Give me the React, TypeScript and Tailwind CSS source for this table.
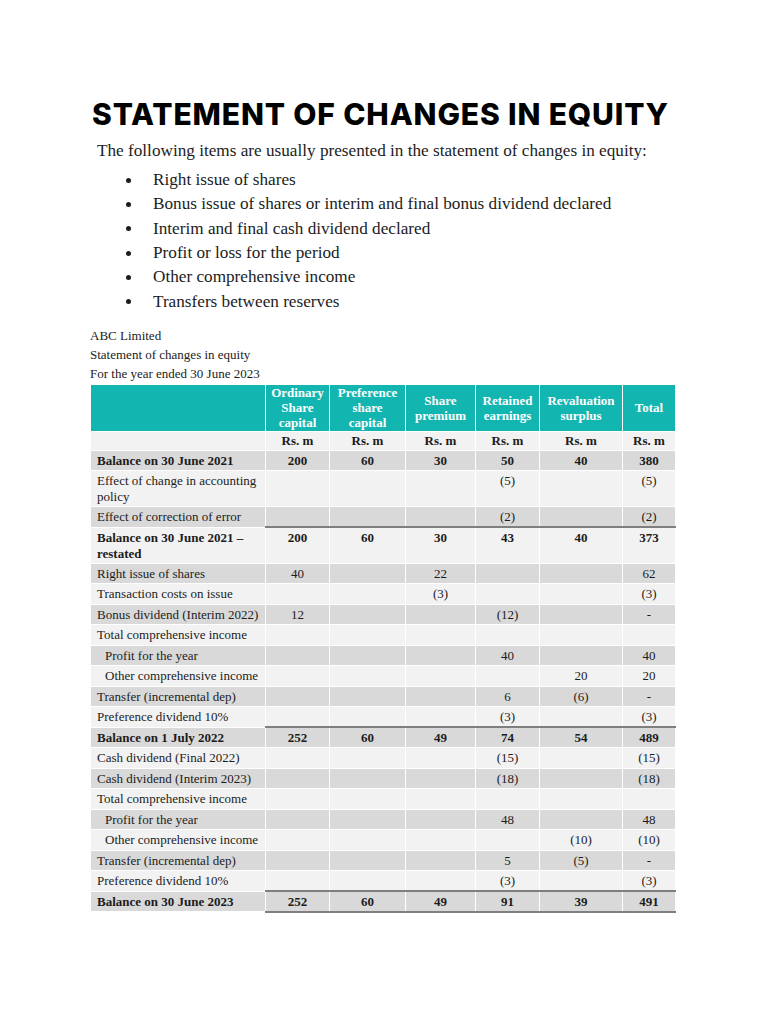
const items = [
  "Right issue of shares",
  "Bonus issue of shares or interim and final bonus dividend declared",
  "Interim and final cash dividend declared",
  "Profit or loss for the period",
  "Other comprehensive income",
  "Transfers between reserves",
];

type Row = {
  label: string;
  values: string[];
  bold?: boolean;
  indent?: boolean;
  dark?: boolean;
  topLine?: boolean;
  bottomLine?: boolean;
  tall?: boolean;
};

const rows: Row[] = [
  { label: "Balance on 30 June 2021", values: ["200", "60", "30", "50", "40", "380"], bold: true, dark: true },
  { label: "Effect of change in accounting policy", values: ["", "", "", "(5)", "", "(5)"], tall: true },
  { label: "Effect of correction of error", values: ["", "", "", "(2)", "", "(2)"], dark: true },
  { label: "Balance on 30 June 2021 – restated", values: ["200", "60", "30", "43", "40", "373"], bold: true, topLine: true, tall: true },
  { label: "Right issue of shares", values: ["40", "", "22", "", "", "62"], dark: true },
  { label: "Transaction costs on issue", values: ["", "", "(3)", "", "", "(3)"] },
  { label: "Bonus dividend (Interim 2022)", values: ["12", "", "", "(12)", "", "-"], dark: true },
  { label: "Total comprehensive income", values: ["", "", "", "", "", ""] },
  { label: "Profit for the year", values: ["", "", "", "40", "", "40"], indent: true, dark: true },
  { label: "Other comprehensive income", values: ["", "", "", "", "20", "20"], indent: true },
  { label: "Transfer (incremental dep)", values: ["", "", "", "6", "(6)", "-"], dark: true },
  { label: "Preference dividend 10%", values: ["", "", "", "(3)", "", "(3)"] },
  { label: "Balance on 1 July 2022", values: ["252", "60", "49", "74", "54", "489"], bold: true, dark: true, topLine: true },
  { label: "Cash dividend (Final 2022)", values: ["", "", "", "(15)", "", "(15)"] },
  { label: "Cash dividend (Interim 2023)", values: ["", "", "", "(18)", "", "(18)"], dark: true },
  { label: "Total comprehensive income", values: ["", "", "", "", "", ""] },
  { label: "Profit for the year", values: ["", "", "", "48", "", "48"], indent: true, dark: true },
  { label: "Other comprehensive income", values: ["", "", "", "", "(10)", "(10)"], indent: true },
  { label: "Transfer (incremental dep)", values: ["", "", "", "5", "(5)", "-"], dark: true },
  { label: "Preference dividend 10%", values: ["", "", "", "(3)", "", "(3)"] },
  { label: "Balance on 30 June 2023", values: ["252", "60", "49", "91", "39", "491"], bold: true, dark: true, topLine: true, bottomLine: true },
];

const headers = [
  ["Ordinary", "Share", "capital"],
  ["Preference", "share", "capital"],
  ["Share", "premium"],
  ["Retained", "earnings"],
  ["Revaluation", "surplus"],
  ["Total"],
];

const App = () => {
  return (
    <div className="min-h-[1024px] w-[768px] bg-white text-[#1c1c1c]">
      <div className="pl-[92px] pt-[96px]">
        <h1 className="font-['Inter',sans-serif] text-[30px] font-extrabold leading-[36px] tracking-[0.85px] text-black">
          STATEMENT OF CHANGES IN EQUITY
        </h1>
      </div>

      <div className="pl-[97px] pt-[7px] font-['Liberation_Serif',serif] text-[17.2px] leading-[24px]">
        <p>The following items are usually presented in the statement of changes in equity:</p>
        <ul className="mt-[5px]">
          {items.map((item) => (
            <li key={item} className="flex h-[24.3px] items-center">
              <span className="flex w-[56px] pl-[29px]">
                <span className="h-[5px] w-[5px] rounded-full bg-[#1c1c1c]" />
              </span>
              <span>{item}</span>
            </li>
          ))}
        </ul>
      </div>

      <div className="pl-[90px] pt-[12px] font-['Liberation_Serif',serif] text-[13px] leading-[19px]">
        <div>ABC Limited</div>
        <div>Statement of changes in equity</div>
        <div>For the year ended 30 June 2023</div>

        <table className="mt-[1px] w-[585px] table-fixed border-collapse text-[13px] leading-[16px]">
          <colgroup>
            <col className="w-[175px]" />
            <col className="w-[64px]" />
            <col className="w-[76px]" />
            <col className="w-[70px]" />
            <col className="w-[64px]" />
            <col className="w-[83px]" />
            <col className="w-[53px]" />
          </colgroup>
          <thead>
            <tr className="h-[47px] bg-[#12b5b0] text-white">
              <th className="border border-white"></th>
              {headers.map((h) => (
                <th key={h[0]} className="border border-white text-center font-bold leading-[15px]">
                  {h.map((line) => (
                    <div key={line}>{line}</div>
                  ))}
                </th>
              ))}
            </tr>
            <tr className="h-[19px] bg-[#f2f2f2]">
              <th className="border border-white"></th>
              {headers.map((h) => (
                <th key={h[0]} className="border border-white text-center font-bold">
                  Rs. m
                </th>
              ))}
            </tr>
          </thead>
          <tbody>
            {rows.map((r, i) => (
              <tr
                key={i}
                className={`${r.tall ? "h-[36px]" : "h-[20.5px]"} ${r.dark ? "bg-[#d9d9d9]" : "bg-[#f2f2f2]"} ${r.bold ? "font-bold" : ""}`}
              >
                <td
                  className={`border border-white pr-1 pt-[2px] align-top ${r.tall ? "" : "whitespace-nowrap"} ${r.indent ? "pl-[14px]" : "pl-[6px]"}`}
                >
                  {r.label}
                </td>
                {r.values.map((v, j) => (
                  <td
                    key={j}
                    className={`border border-white pt-[2px] text-center align-top ${r.topLine ? "border-t-2 border-t-[#7f7f7f]" : ""} ${r.bottomLine ? "border-b-2 border-b-[#7f7f7f]" : ""}`}
                  >
                    {v}
                  </td>
                ))}
              </tr>
            ))}
          </tbody>
        </table>
      </div>
    </div>
  );
};

export default App;
